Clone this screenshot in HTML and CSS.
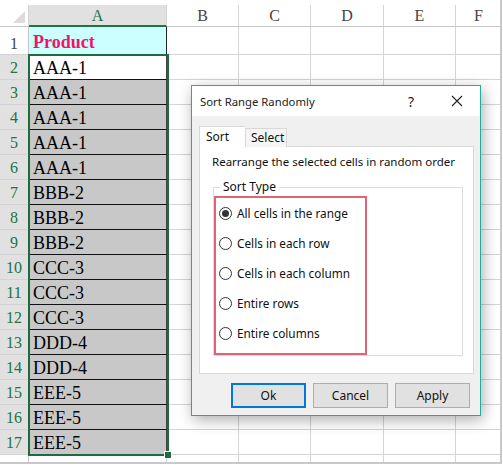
FILE: index.html
```html
<!DOCTYPE html>
<html>
<head>
<meta charset="utf-8">
<link rel="stylesheet" href="styles.css">
</head>
<body>
<div class="frame">
  <div class="sheet">
    <div class="corner"><svg class="tri" width="12" height="12" viewBox="0 0 12 12"><polygon points="12,0 12,12 0,12" fill="#dcdcdc"/></svg></div>
    <div class="ch ch-sel">A</div><div class="ch">B</div><div class="ch">C</div><div class="ch">D</div><div class="ch">E</div><div class="ch">F</div>

    <div class="rh rh-1">1</div><div class="cell a1">Product</div><div class="cell"></div><div class="cell"></div><div class="cell"></div><div class="cell"></div><div class="cell"></div>
    <div class="rh rh-sel">2</div><div class="cell ca active">AAA-1</div><div class="cell"></div><div class="cell"></div><div class="cell"></div><div class="cell"></div><div class="cell"></div>
    <div class="rh rh-sel">3</div><div class="cell ca">AAA-1</div><div class="cell"></div><div class="cell"></div><div class="cell"></div><div class="cell"></div><div class="cell"></div>
    <div class="rh rh-sel">4</div><div class="cell ca">AAA-1</div><div class="cell"></div><div class="cell"></div><div class="cell"></div><div class="cell"></div><div class="cell"></div>
    <div class="rh rh-sel">5</div><div class="cell ca">AAA-1</div><div class="cell"></div><div class="cell"></div><div class="cell"></div><div class="cell"></div><div class="cell"></div>
    <div class="rh rh-sel">6</div><div class="cell ca">AAA-1</div><div class="cell"></div><div class="cell"></div><div class="cell"></div><div class="cell"></div><div class="cell"></div>
    <div class="rh rh-sel">7</div><div class="cell ca">BBB-2</div><div class="cell"></div><div class="cell"></div><div class="cell"></div><div class="cell"></div><div class="cell"></div>
    <div class="rh rh-sel">8</div><div class="cell ca">BBB-2</div><div class="cell"></div><div class="cell"></div><div class="cell"></div><div class="cell"></div><div class="cell"></div>
    <div class="rh rh-sel">9</div><div class="cell ca">BBB-2</div><div class="cell"></div><div class="cell"></div><div class="cell"></div><div class="cell"></div><div class="cell"></div>
    <div class="rh rh-sel">10</div><div class="cell ca">CCC-3</div><div class="cell"></div><div class="cell"></div><div class="cell"></div><div class="cell"></div><div class="cell"></div>
    <div class="rh rh-sel">11</div><div class="cell ca">CCC-3</div><div class="cell"></div><div class="cell"></div><div class="cell"></div><div class="cell"></div><div class="cell"></div>
    <div class="rh rh-sel">12</div><div class="cell ca">CCC-3</div><div class="cell"></div><div class="cell"></div><div class="cell"></div><div class="cell"></div><div class="cell"></div>
    <div class="rh rh-sel">13</div><div class="cell ca">DDD-4</div><div class="cell"></div><div class="cell"></div><div class="cell"></div><div class="cell"></div><div class="cell"></div>
    <div class="rh rh-sel">14</div><div class="cell ca">DDD-4</div><div class="cell"></div><div class="cell"></div><div class="cell"></div><div class="cell"></div><div class="cell"></div>
    <div class="rh rh-sel">15</div><div class="cell ca">EEE-5</div><div class="cell"></div><div class="cell"></div><div class="cell"></div><div class="cell"></div><div class="cell"></div>
    <div class="rh rh-sel">16</div><div class="cell ca">EEE-5</div><div class="cell"></div><div class="cell"></div><div class="cell"></div><div class="cell"></div><div class="cell"></div>
    <div class="rh rh-sel">17</div><div class="cell ca">EEE-5</div><div class="cell"></div><div class="cell"></div><div class="cell"></div><div class="cell"></div><div class="cell"></div>
    <div class="rh rh-last"></div><div class="cell"></div><div class="cell"></div><div class="cell"></div><div class="cell"></div><div class="cell"></div><div class="cell"></div>

    <div class="selection"><span class="handle"></span></div>
  </div>

  <div class="dlg">
    <div class="titlebar">
      <span class="title">Sort Range Randomly</span>
      <span class="tbtn help">?</span>
      <span class="tbtn close"><svg width="12" height="12" viewBox="0 0 12 12"><path d="M1 1L11 11M11 1L1 11" stroke="#222" stroke-width="1.1" fill="none"/></svg></span>
    </div>
    <div class="dbody">
      <div class="tabs">
        <div class="tab tab-active">Sort</div>
        <div class="tab">Select</div>
      </div>
      <div class="panel">
        <p class="desc">Rearrange the selected cells in random order</p>
        <fieldset class="group">
          <legend>Sort Type</legend>
          <div class="mark">
            <div class="radio"><span class="dot dot-on"></span>All cells in the range</div>
            <div class="radio"><span class="dot"></span>Cells in each row</div>
            <div class="radio"><span class="dot"></span>Cells in each column</div>
            <div class="radio"><span class="dot"></span>Entire rows</div>
            <div class="radio"><span class="dot"></span>Entire columns</div>
          </div>
        </fieldset>
      </div>
      <div class="buttons">
        <div class="btn btn-default">Ok</div>
        <div class="btn">Cancel</div>
        <div class="btn">Apply</div>
      </div>
    </div>
  </div>
</div>
</body>
</html>
```

FILE: styles.css
```css
html, body {
  margin: 0;
  padding: 0;
  background: #fff;
}
.frame {
  position: relative;
  width: 503px;
  height: 465px;
  overflow: hidden;
  background: #fff;
}
.sheet {
  position: relative;
  display: grid;
  width: 502px;
  height: 464px;
  padding-top: 5px;
  grid-template-columns: 29px 138px 72px 72px 73px 72px 46px;
  grid-template-rows: 22px 28px repeat(16, 25px) 25px;
  border-right: 2px solid #c8c8c8;
  border-bottom: 2px solid #c8c8c8;
  box-sizing: border-box;
  overflow: hidden;
}
.sheet > div {
  box-sizing: border-box;
}
.corner {
  border-right: 1px solid #d4d4d4;
  border-bottom: 1px solid #c6c6c6;
  background: #fff;
  display: flex;
  align-items: flex-end;
  justify-content: flex-end;
  padding: 0 3px 3px 0;
}
.tri { display: block; }
.ch {
  font-family: "Liberation Serif", serif;
  font-size: 16px;
  color: #444;
  text-align: center;
  line-height: 21px;
  border-right: 1px solid #d4d4d4;
  border-bottom: 1px solid #c6c6c6;
  background: #fff;
}
.ch-sel {
  background: #e1e1e1;
  color: #217346;
  border-bottom: 2px solid #217346;
}
.rh {
  font-family: "Liberation Serif", serif;
  font-size: 16px;
  color: #444;
  border-right: 1px solid #c6c6c6;
  border-bottom: 1px solid #d4d4d4;
  display: flex;
  align-items: center;
  justify-content: center;
  padding-top: 1px;
  background: #fff;
}
.rh-1 {
  padding-top: 6px;
}
.rh-sel {
  background: #e1e1e1;
  color: #217346;
}
.cell {
  border-right: 1px solid #d4d4d4;
  border-bottom: 1px solid #d4d4d4;
  font-family: "Liberation Serif", serif;
  font-size: 18px;
  color: #000;
  padding-left: 4px;
  display: flex;
  align-items: center;
  white-space: nowrap;
}
.a1 {
  background: #ccffff;
  color: #f0146c;
  font-weight: bold;
  border-right: 1px solid #222;
  padding-top: 4px;
}
.ca {
  background: #c8c8c8;
  border-bottom: 1px solid #111;
  border-right: 1px solid #444;
  padding-top: 2px;
}
.ca.active {
  background: #fff;
}
.selection {
  position: absolute;
  left: 28px;
  top: 54px;
  width: 141px;
  height: 402px;
  box-sizing: border-box;
  border: 2px solid #1e6b40;
  pointer-events: none;
}
.handle {
  position: absolute;
  right: -5px;
  bottom: -5px;
  width: 6px;
  height: 6px;
  background: #1e6b40;
  border: 1px solid #fff;
}

/* dialog */
.dlg {
  position: absolute;
  left: 191px;
  top: 85px;
  width: 290px;
  height: 331px;
  box-sizing: border-box;
  border: 1px solid #1fae96;
  background: #f0f0f0;
  box-shadow: 2px 4px 14px rgba(0, 0, 0, 0.32);
  font-family: "Noto Sans", sans-serif;
  font-size: 11px;
  color: #111;
  display: flex;
  flex-direction: column;
}
.titlebar {
  height: 30px;
  background: #fff;
  display: flex;
  align-items: center;
  padding-left: 8px;
  flex: none;
}
.title {
  flex: 1;
  font-size: 11.3px;
  color: #222;
}
.tbtn {
  width: 46px;
  height: 30px;
  display: flex;
  align-items: center;
  justify-content: center;
  font-size: 14px;
  color: #222;
}
.dbody {
  flex: 1;
  padding: 10px 6px 7px 7px;
  display: flex;
  flex-direction: column;
}
.tabs {
  display: flex;
  align-items: flex-end;
  height: 21px;
  margin-bottom: -1px;
  position: relative;
  z-index: 1;
}
.tab {
  box-sizing: border-box;
  height: 19px;
  width: 42px;
  border: 1px solid #d9d9d9;
  border-bottom: none;
  background: #f5f5f5;
  padding-left: 5px;
  line-height: 18px;
  font-size: 12px;
}
.tab-active {
  height: 21px;
  width: 46px;
  background: #fff;
  border-right: none;
  line-height: 20px;
  padding-left: 6px;
}
.panel {
  box-sizing: border-box;
  width: 275px;
  height: 228px;
  background: #fff;
  border: 1px solid #d9d9d9;
  padding: 7px 10px 0 12px;
}
.desc {
  margin: 0;
  line-height: 16px;
  font-size: 11.5px;
}
.group {
  margin: 9px 0 0 1px;
  padding: 0;
  border: 1px solid #dcdcdc;
  width: 250px;
  height: 177px;
  box-sizing: border-box;
  min-width: 0;
}
.group legend {
  margin-left: 6px;
  padding: 0 3px;
  line-height: 16px;
  font-size: 12px;
}
.mark {
  box-sizing: border-box;
  width: 153px;
  height: 159px;
  margin-top: 1px;
  border: 2px solid #e06477;
}
.radio {
  height: 30px;
  display: flex;
  align-items: center;
  padding-left: 3px;
  font-size: 11.8px;
  gap: 5px;
}
.dot {
  box-sizing: border-box;
  width: 13px;
  height: 13px;
  border: 1px solid #333;
  border-radius: 50%;
  background: #fff;
  display: flex;
  align-items: center;
  justify-content: center;
  flex: none;
}
.dot-on::after {
  content: "";
  width: 7px;
  height: 7px;
  border-radius: 50%;
  background: #333;
}
.buttons {
  margin-top: 9px;
  display: flex;
  justify-content: flex-end;
  gap: 7px;
  padding-right: 4px;
}
.btn {
  box-sizing: border-box;
  width: 75px;
  height: 25px;
  border: 1px solid #adadad;
  background: #e1e1e1;
  display: flex;
  align-items: center;
  justify-content: center;
  font-size: 12px;
}
.btn-default {
  border: 2px solid #0078d7;
}
```
